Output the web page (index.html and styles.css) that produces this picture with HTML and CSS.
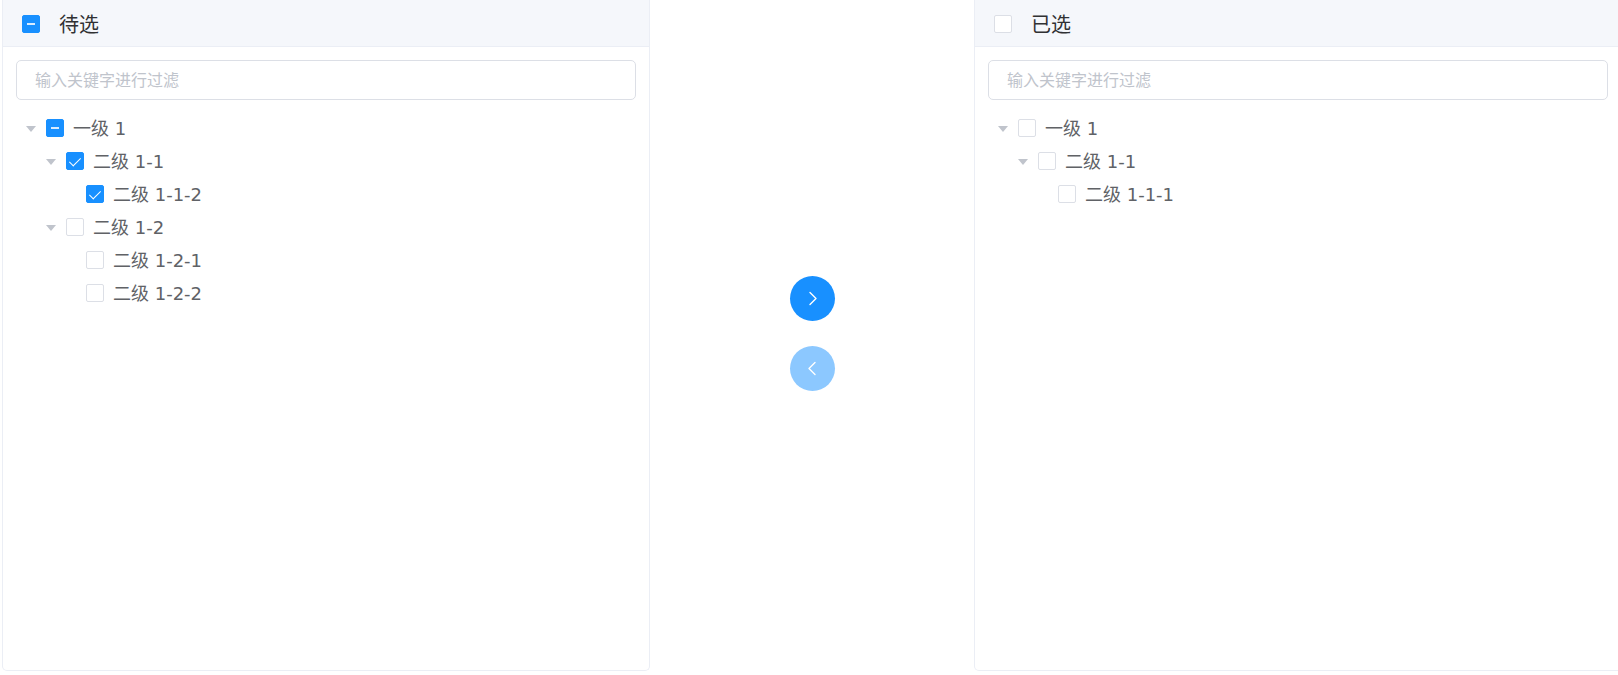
FILE: index.html
```html
<!DOCTYPE html>
<html lang="zh-CN">
<head>
    <meta charset="UTF-8">
    <meta name="viewport" content="width=device-width, initial-scale=1.0">
    <title>树形穿梭框</title>
    <link rel="stylesheet" href="styles.css">
</head>
<body>

    <div class="transfer">
        <!-- 待选 -->
        <section class="panel">
            <div class="panel-header">
                <input type="checkbox" class="checkbox" id="fromAll" data-half>
                <label for="fromAll">待选</label>
            </div>
            <div class="panel-body">
                <input type="text" class="filter" placeholder="输入关键字进行过滤" aria-label="过滤待选">
                <ul class="tree">
                    <li>
                        <div class="node">
                            <button type="button" class="toggle" aria-label="收起"></button>
                            <input type="checkbox" class="checkbox" id="f1" data-half>
                            <label for="f1">一级 1</label>
                        </div>
                        <ul>
                            <li>
                                <div class="node">
                                    <button type="button" class="toggle" aria-label="收起"></button>
                                    <input type="checkbox" class="checkbox" id="f11" checked>
                                    <label for="f11">二级 1-1</label>
                                </div>
                                <ul>
                                    <li>
                                        <div class="node leaf">
                                            <input type="checkbox" class="checkbox" id="f112" checked>
                                            <label for="f112">二级 1-1-2</label>
                                        </div>
                                    </li>
                                </ul>
                            </li>
                            <li>
                                <div class="node">
                                    <button type="button" class="toggle" aria-label="收起"></button>
                                    <input type="checkbox" class="checkbox" id="f12">
                                    <label for="f12">二级 1-2</label>
                                </div>
                                <ul>
                                    <li>
                                        <div class="node leaf">
                                            <input type="checkbox" class="checkbox" id="f121">
                                            <label for="f121">二级 1-2-1</label>
                                        </div>
                                    </li>
                                    <li>
                                        <div class="node leaf">
                                            <input type="checkbox" class="checkbox" id="f122">
                                            <label for="f122">二级 1-2-2</label>
                                        </div>
                                    </li>
                                </ul>
                            </li>
                        </ul>
                    </li>
                </ul>
            </div>
        </section>

        <!-- 穿梭按钮 -->
        <div class="actions">
            <button type="button" class="move" aria-label="移到已选">
                <svg width="19" height="19" viewBox="0 0 19 19"><path d="M7 3.500l6 6-6 6"/></svg>
            </button>
            <button type="button" class="move" aria-label="移到待选" disabled>
                <svg width="19" height="19" viewBox="0 0 19 19"><path d="M12 3.500l-6 6 6 6"/></svg>
            </button>
        </div>

        <!-- 已选 -->
        <section class="panel">
            <div class="panel-header">
                <input type="checkbox" class="checkbox" id="toAll">
                <label for="toAll">已选</label>
            </div>
            <div class="panel-body">
                <input type="text" class="filter" placeholder="输入关键字进行过滤" aria-label="过滤已选">
                <ul class="tree">
                    <li>
                        <div class="node">
                            <button type="button" class="toggle" aria-label="收起"></button>
                            <input type="checkbox" class="checkbox" id="t1">
                            <label for="t1">一级 1</label>
                        </div>
                        <ul>
                            <li>
                                <div class="node">
                                    <button type="button" class="toggle" aria-label="收起"></button>
                                    <input type="checkbox" class="checkbox" id="t11">
                                    <label for="t11">二级 1-1</label>
                                </div>
                                <ul>
                                    <li>
                                        <div class="node leaf">
                                            <input type="checkbox" class="checkbox" id="t111">
                                            <label for="t111">二级 1-1-1</label>
                                        </div>
                                    </li>
                                </ul>
                            </li>
                        </ul>
                    </li>
                </ul>
            </div>
        </section>
    </div>

    <script>
        // 半选状态只能通过脚本设置
        document.querySelectorAll("[data-half]").forEach(box => {
            box.indeterminate = true;
        });

        document.querySelectorAll(".toggle").forEach(btn => {
            btn.addEventListener("click", () => {
                btn.closest("li").classList.toggle("collapsed");
            });
        });
    </script>
</body>
</html>
```
FILE: styles.css
```css
* {
    box-sizing: border-box;
}

body {
    margin: 0;
    overflow-x: hidden;
    font-family: "DejaVu Sans", "Noto Sans CJK SC", sans-serif;
    color: #606266;
    background-color: #fff;
}

label {
    padding-bottom: 2px;
    cursor: pointer;
}

.transfer {
    display: grid;
    grid-template-columns: 2fr 1fr 2fr;
    min-height: calc(100vh - 4px);
    margin: 0 -4px 0 2px;
}

.panel {
    border: 1px solid #ebeef5;
    border-top: none;
    border-radius: 0 0 5px 5px;
}

.panel-header {
    display: flex;
    align-items: center;
    gap: 19px;
    height: 47px;
    padding: 2px 19px 0;
    border-bottom: 1px solid #ebeef5;
    background-color: #f5f7fb;
    color: #303133;
    font-size: 20px;
}

.panel-body {
    padding: 13px;
}

.filter {
    display: block;
    width: 100%;
    height: 40px;
    padding: 0 18px;
    border: 1px solid #dcdfe6;
    border-radius: 5px;
    outline: none;
    background-color: #fff;
    color: #606266;
    font-family: inherit;
    font-size: 16px;
}

.filter:focus {
    border-color: #1890ff;
}

.filter::placeholder {
    color: #c0c4cc;
}

/* 树 */
.tree,
.tree ul {
    margin: 0;
    padding: 0;
    list-style: none;
}

.tree {
    margin-top: 11px;
}

.tree ul {
    padding-left: 20px;
}

.collapsed > ul {
    display: none;
}

.node {
    display: flex;
    align-items: center;
    gap: 9px;
    height: 33px;
    font-size: 18px;
}

.leaf {
    padding-left: 30px;
}

.toggle {
    display: flex;
    justify-content: center;
    width: 30px;
    margin-right: -9px;
    padding: 2px 0 0;
    border: none;
    background: none;
    cursor: pointer;
}

.toggle::before {
    content: "";
    border: 5px solid transparent;
    border-top: 6px solid #c0c4cc;
    border-bottom: none;
}

.collapsed > .node .toggle::before {
    transform: rotate(-90deg);
}

/* 复选框 */
.checkbox {
    appearance: none;
    position: relative;
    flex: none;
    width: 18px;
    height: 18px;
    margin: 0;
    border: 1px solid #dcdfe6;
    border-radius: 2px;
    background-color: #fff;
    cursor: pointer;
}

.checkbox:checked,
.checkbox:indeterminate {
    border-color: #1890ff;
    background-color: #1890ff;
}

.checkbox:checked::after {
    content: "";
    position: absolute;
    top: 2px;
    left: 5px;
    width: 5px;
    height: 10px;
    border: 1px solid #fff;
    border-top: none;
    border-left: none;
    transform: rotate(45deg);
}

.checkbox:indeterminate::after {
    content: "";
    position: absolute;
    top: 7px;
    left: 4px;
    width: 8px;
    height: 2px;
    background-color: #d9ecff;
}

/* 按钮 */
.actions {
    display: flex;
    flex-direction: column;
    align-items: center;
    justify-content: center;
    gap: 25px;
    padding-bottom: 4px;
}

.move {
    display: flex;
    align-items: center;
    justify-content: center;
    width: 45px;
    height: 45px;
    padding: 0;
    border: none;
    border-radius: 50%;
    background-color: #1890ff;
    cursor: pointer;
}

.move:disabled {
    background-color: #8cc8ff;
    cursor: not-allowed;
}

.move svg {
    fill: none;
    stroke: #fff;
    stroke-width: 1.4;
    stroke-linecap: round;
    stroke-linejoin: round;
}
```
